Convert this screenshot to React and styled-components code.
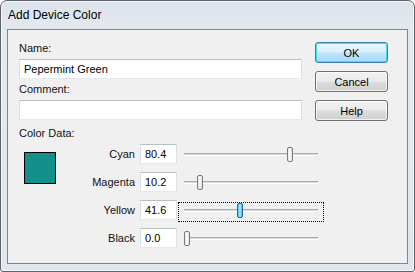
import React from "react";
import styled, { createGlobalStyle, css } from "styled-components";

const Global = createGlobalStyle`
  html, body { margin: 0; padding: 0; background: #ffffff; }
  body { font-family: "Liberation Sans", Arial, sans-serif; }
  * { box-sizing: border-box; }
`;

const Window = styled.div`
  width: 415px;
  height: 272px;
  border: 1px solid #5e6166;
  border-radius: 7px 7px 3px 3px;
  background: linear-gradient(to bottom, #dce3ec 0px, #e4e9f0 28px, #dfe6ee 100%);
  box-shadow: inset 0 0 0 1px rgba(255, 255, 255, 0.75);
  padding: 0 6px 7px 6px;
  display: flex;
  flex-direction: column;
`;

const TitleBar = styled.div`
  height: 28px;
  display: flex;
  align-items: center;
  padding-left: 1px;
  font-size: 12px;
  color: #000;
`;

const Client = styled.div`
  flex: 1;
  border: 1px solid #7d858f;
  background: #f0f0f0;
  padding: 12px 0 0 11px;
  display: flex;
  flex-direction: column;
  font-size: 11px;
  color: #111;
`;

const TopSection = styled.div`
  display: flex;
`;

const Fields = styled.div`
  width: 283px;
  display: flex;
  flex-direction: column;
`;

const FieldGroup = styled.div`
  display: flex;
  flex-direction: column;
  gap: 4px;
  margin-top: ${(p) => (p.$first ? 0 : 4)}px;
`;

const Label = styled.div`
  line-height: 13px;
  height: 13px;
  white-space: nowrap;
`;

const TextBox = styled.input`
  height: 20px;
  width: ${(p) => p.$width || "100%"};
  border: 1px solid #dbdfe6;
  border-top-color: #b9bdc4;
  border-bottom-color: #e3e9ef;
  background: #fff;
  padding: 0 4px;
  font: 11px "Liberation Sans", Arial, sans-serif;
  color: #000;
  outline: none;
`;

const Buttons = styled.div`
  margin-left: 13px;
  display: flex;
  flex-direction: column;
  gap: 8px;
`;

const Button = styled.button`
  width: 73px;
  height: 21px;
  border-radius: 3px;
  font: 11px "Liberation Sans", Arial, sans-serif;
  color: #000;
  padding: 0;
  border: 1px solid #707070;
  background: linear-gradient(to bottom, #f2f2f2 0%, #ebebeb 48%, #dddddd 52%, #cfcfcf 100%);
  box-shadow: inset 0 0 0 1px rgba(255, 255, 255, 0.7);
  ${(p) =>
    p.$default &&
    css`
      border-color: #3c7fb1;
      background: linear-gradient(to bottom, #eaf6fd 0%, #d9f0fc 48%, #bee6fd 52%, #a7d9f5 100%);
      box-shadow: inset 0 0 0 1px #48d8fb;
    `}
`;

const SectionLabel = styled(Label)`
  margin-top: 6px;
`;

const ColorArea = styled.div`
  display: flex;
  margin-top: 4px;
  padding-left: 5px;
`;

const Swatch = styled.div`
  width: 32px;
  height: 32px;
  margin-top: 8px;
  border: 1px solid #000;
  background: ${(p) => p.$color};
`;

const Grid = styled.div`
  display: grid;
  grid-template-columns: 84px 38px 146px;
  row-gap: 8px;
  grid-auto-rows: 20px;
`;

const RowLabel = styled.div`
  text-align: right;
  padding-right: 5px;
  line-height: 20px;
  white-space: nowrap;
`;

const SliderBox = styled.div`
  position: relative;
  height: 20px;
  margin-top: 2px;
  border: 1px dotted ${(p) => (p.$focused ? "#000" : "transparent")};
`;

const Track = styled.div`
  position: absolute;
  left: 5px;
  right: 5px;
  top: 6px;
  height: 3px;
  background: #dadcde;
  border-top: 1px solid #a7abaf;
  border-bottom: 1px solid #ffffff;
`;

const Thumb = styled.div`
  position: absolute;
  top: 0;
  width: 6px;
  height: 15px;
  border-radius: 2px;
  border: 1px solid #7a7a7a;
  background: linear-gradient(to right, #e6e6e6, #ffffff 50%, #dcdcdc);
  ${(p) =>
    p.$focused &&
    css`
      border-color: #1b6aa3;
      background: linear-gradient(to right, #39bdf0, #b8f0ff 50%, #35b6ea);
    `}
`;

const channels = [
  { name: "Cyan", value: "80.4" },
  { name: "Magenta", value: "10.2" },
  { name: "Yellow", value: "41.6", focused: true },
  { name: "Black", value: "0.0" },
];

function Slider({ value, focused }) {
  const left = 5 + (parseFloat(value) / 100) * 128;
  return (
    <SliderBox $focused={focused}>
      <Track />
      <Thumb $focused={focused} style={{ left: `${left}px` }} />
    </SliderBox>
  );
}

export default function App() {
  return (
    <>
      <Global />
      <Window>
        <TitleBar>Add Device Color</TitleBar>
        <Client>
          <TopSection>
            <Fields>
              <FieldGroup $first>
                <Label>Name:</Label>
                <TextBox defaultValue="Pepermint Green" />
              </FieldGroup>
              <FieldGroup>
                <Label>Comment:</Label>
                <TextBox defaultValue="" />
              </FieldGroup>
            </Fields>
            <Buttons>
              <Button $default>OK</Button>
              <Button>Cancel</Button>
              <Button>Help</Button>
            </Buttons>
          </TopSection>
          <SectionLabel>Color Data:</SectionLabel>
          <ColorArea>
            <Swatch $color="#13908a" />
            <Grid>
              {channels.map((c) => (
                <React.Fragment key={c.name}>
                  <RowLabel>{c.name}</RowLabel>
                  <TextBox $width="37px" defaultValue={c.value} />
                  <Slider value={c.value} focused={c.focused} />
                </React.Fragment>
              ))}
            </Grid>
          </ColorArea>
        </Client>
      </Window>
    </>
  );
}
